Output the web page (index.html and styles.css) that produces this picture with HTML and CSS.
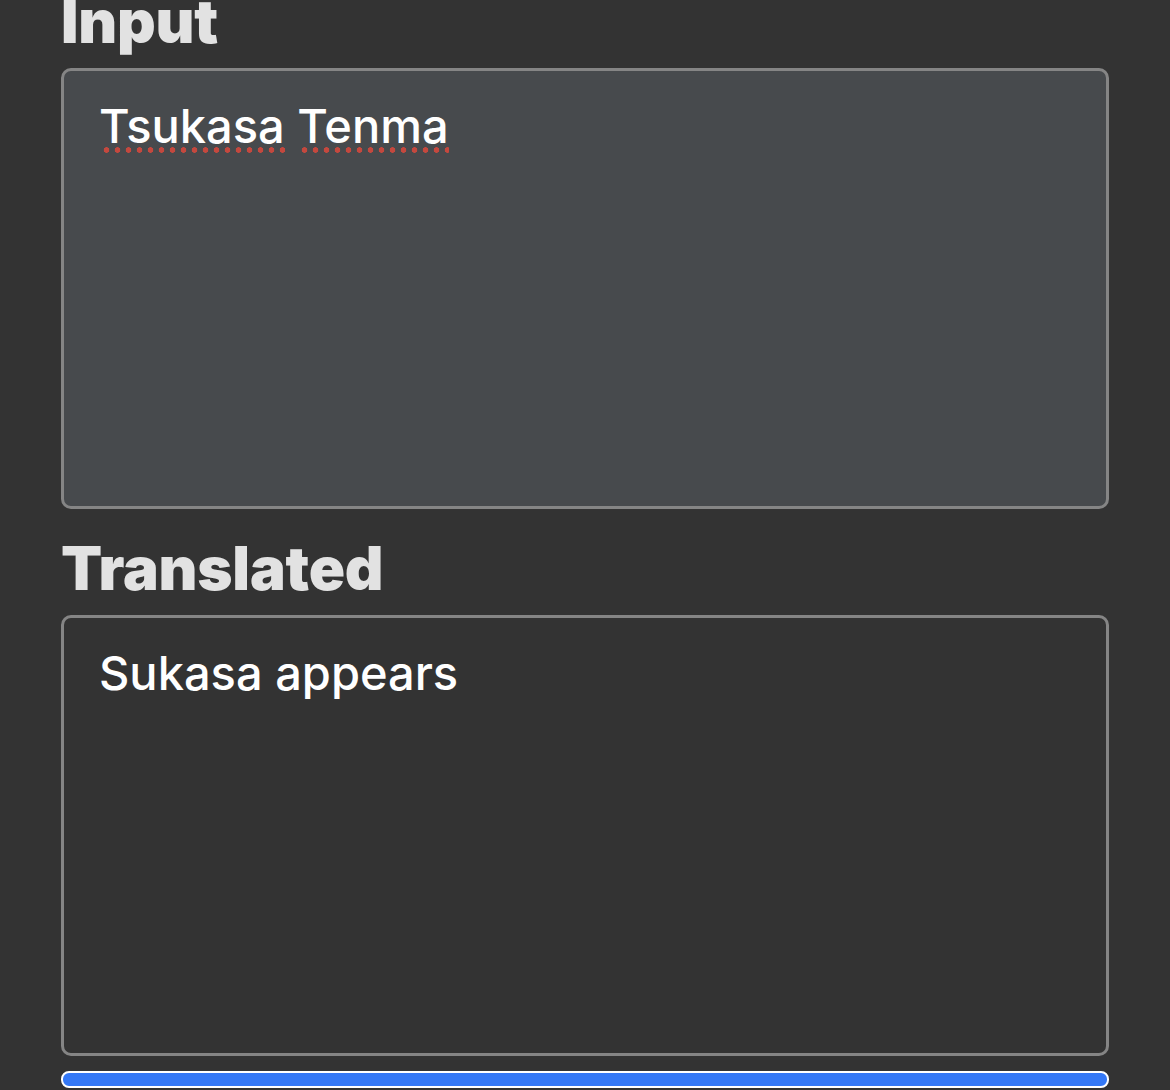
FILE: index.html
```html
<!DOCTYPE html>
<html lang="en">
<head>
<meta charset="utf-8">
<title>Translator</title>
<link rel="stylesheet" href="styles.css">
</head>
<body>
<main class="page">
  <h2 class="label label-first">Input</h2>
  <div class="field field-input"><span class="misspelled">Tsukasa</span> <span class="misspelled">Tenma</span></div>
  <h2 class="label">Translated</h2>
  <div class="field field-output">Sukasa appears</div>
  <button class="submit" type="button"></button>
</main>
</body>
</html>
```
FILE: styles.css
```css
html, body {
  margin: 0;
  padding: 0;
  background: #333333;
}
body {
  font-family: Inter, "Noto Sans", "Liberation Sans", sans-serif;
  overflow: hidden;
}
.page {
  display: flex;
  flex-direction: column;
  width: 1048px;
  margin-left: 61px;
  margin-top: -9px;
}
.label {
  margin: 29px 0 17px 0;
  font-size: 60px;
  line-height: 60px;
  font-weight: 900;
  color: #e2e2e2;
  letter-spacing: -0.2px;
}
.label-first {
  margin-top: 0;
}
.field {
  box-sizing: border-box;
  height: 441px;
  border: 3px solid #858585;
  border-radius: 10px;
  padding: 26px 35px;
  font-size: 47px;
  font-weight: 500;
  color: #ffffff;
}
.field-input {
  background: #474a4d;
}
.field-output {
  background: #333333;
}
.misspelled {
  position: relative;
}
.misspelled::after {
  content: "";
  position: absolute;
  left: 2px;
  right: 0;
  top: 100%;
  margin-top: -7px;
  height: 6px;
  background-image: radial-gradient(circle at center, #c4483e 2.5px, transparent 3.1px);
  background-size: 11px 6px;
  background-repeat: repeat-x;
}
.submit {
  margin-top: 15px;
  height: 17px;
  border: 2px solid #ffffff;
  border-radius: 8px;
  background: #3478f6;
  padding: 0;
}
```
